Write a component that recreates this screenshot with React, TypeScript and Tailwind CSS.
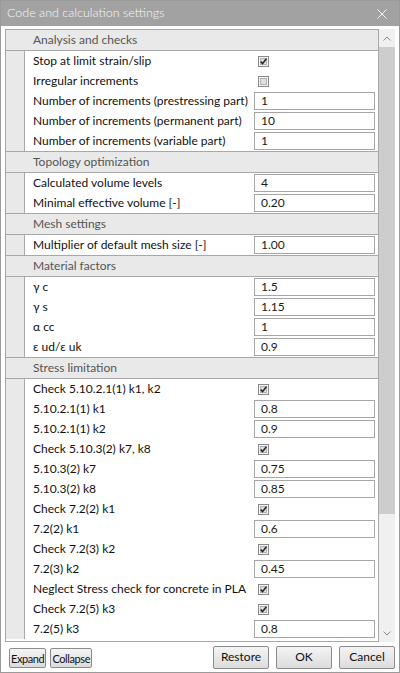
import React from "react";

type Row = { label: string; value?: string; check?: boolean };
type Section = { title: string; rows: Row[] };

const sections: Section[] = [
  {
    title: "Analysis and checks",
    rows: [
      { label: "Stop at limit strain/slip", check: true },
      { label: "Irregular increments", check: false },
      { label: "Number of increments (prestressing part)", value: "1" },
      { label: "Number of increments (permanent part)", value: "10" },
      { label: "Number of increments (variable part)", value: "1" },
    ],
  },
  {
    title: "Topology optimization",
    rows: [
      { label: "Calculated volume levels", value: "4" },
      { label: "Minimal effective volume [-]", value: "0.20" },
    ],
  },
  {
    title: "Mesh settings",
    rows: [{ label: "Multiplier of default mesh size [-]", value: "1.00" }],
  },
  {
    title: "Material factors",
    rows: [
      { label: "γ c", value: "1.5" },
      { label: "γ s", value: "1.15" },
      { label: "α cc", value: "1" },
      { label: "ε ud/ε uk", value: "0.9" },
    ],
  },
  {
    title: "Stress limitation",
    rows: [
      { label: "Check 5.10.2.1(1) k1, k2", check: true },
      { label: "5.10.2.1(1) k1", value: "0.8" },
      { label: "5.10.2.1(1) k2", value: "0.9" },
      { label: "Check 5.10.3(2) k7, k8", check: true },
      { label: "5.10.3(2) k7", value: "0.75" },
      { label: "5.10.3(2) k8", value: "0.85" },
      { label: "Check 7.2(2) k1", check: true },
      { label: "7.2(2) k1", value: "0.6" },
      { label: "Check 7.2(3) k2", check: true },
      { label: "7.2(3) k2", value: "0.45" },
      { label: "Neglect Stress check for concrete in PLA", check: true },
      { label: "Check 7.2(5) k3", check: true },
      { label: "7.2(5) k3", value: "0.8" },
    ],
  },
];

const CheckBox = ({ checked }: { checked: boolean }) => (
  <svg width="11" height="11" viewBox="0 0 11 11">
    <rect x="0.5" y="0.5" width="10" height="10" fill="#f2f2f2" stroke="#8a8a8a" />
    <rect x="2.5" y="2.5" width="6" height="6" fill="#dedede" stroke="#b4b4b4" />
    {checked && (
      <path d="M2.8 5.6 L4.6 7.6 L8.4 2.8" fill="none" stroke="#2a2a2a" strokeWidth="1.6" />
    )}
  </svg>
);

const SettingRow = ({ row }: { row: Row }) => (
  <div className="flex h-[20px]">
    <div className="w-[19px] shrink-0 bg-[#e9e9e9] border-r border-[#a8a8a8]" />
    <div className="flex-1 flex items-center pl-[8px] text-[12px] text-[#111] whitespace-nowrap overflow-hidden">
      {row.label}
    </div>
    <div className="w-[124px] shrink-0 flex items-center pr-[3px]">
      {row.check !== undefined ? (
        <div className="pl-[4px] flex items-center">
          <CheckBox checked={row.check} />
        </div>
      ) : (
        <div className="w-full h-[18px] border border-[#a6a6a6] bg-white flex items-center pl-[6px] text-[12px] text-[#1a1a1a]">
          {row.value}
        </div>
      )}
    </div>
  </div>
);

const btnBase =
  "border border-[#8c8c8c] rounded-[2px] bg-gradient-to-b from-[#f4f4f4] to-[#dcdcdc] text-[#111] flex items-center justify-center leading-none whitespace-nowrap";

const App = () => {
  return (
    <div
      className="w-[400px] h-[673px] border border-[#9a9a9a] bg-white flex flex-col overflow-hidden"
      style={{ fontFamily: "Lato, 'Noto Sans', sans-serif" }}
    >
      <div className="h-[25px] shrink-0 bg-[#a2a2a2] flex items-center justify-between pl-[6px] pr-[12px]">
        <span className="text-[12.5px] text-[#f7f7f7] font-light leading-none">
          Code and calculation settings
        </span>
        <svg width="10" height="10" viewBox="0 0 10 10">
          <path d="M0.5 0.5 L9.5 9.5 M9.5 0.5 L0.5 9.5" stroke="#f4f4f4" strokeWidth="1" />
        </svg>
      </div>

      <div className="flex-1 flex flex-col px-[4px] pt-[3px]">
        <div className="h-[613px] flex border-l border-[#a8a8a8]">
          <div className="flex-1 overflow-hidden border-r border-[#a8a8a8] border-b">
            {sections.map((s) => (
              <div key={s.title}>
                <div className="h-[22px] bg-[#e9e9e9] border-y border-[#a8a8a8] flex items-center pl-[27px] text-[12px] text-[#555]">
                  {s.title}
                </div>
                {s.rows.map((r) => (
                  <SettingRow key={r.label} row={r} />
                ))}
              </div>
            ))}
          </div>
          <div className="w-[16px] shrink-0 flex flex-col bg-[#f0f0f0]">
            <div className="h-[18px] flex items-center justify-center">
              <svg width="8" height="5" viewBox="0 0 8 5">
                <path d="M0.5 4.5 L4 1 L7.5 4.5" fill="none" stroke="#8a8a8a" />
              </svg>
            </div>
            <div className="h-[467px] bg-[#cdcdcd]" />
            <div className="flex-1" />
            <div className="h-[18px] flex items-center justify-center">
              <svg width="8" height="5" viewBox="0 0 8 5">
                <path d="M0.5 0.5 L4 4 L7.5 0.5" fill="none" stroke="#8a8a8a" />
              </svg>
            </div>
          </div>
        </div>

        <div className="flex-1 flex items-center pl-[4px]">
          <div className="flex gap-[4px] self-end mb-[4px]">
            <button className={`${btnBase} px-[1px] h-[20px] text-[11px] tracking-[-0.4px]`}>Expand</button>
            <button className={`${btnBase} px-[1px] h-[20px] text-[11px] tracking-[-0.4px]`}>Collapse</button>
          </div>
          <div className="ml-auto flex gap-[7px]">
            <button className={`${btnBase} w-[56px] h-[23px] text-[12px]`}>Restore</button>
            <button className={`${btnBase} w-[56px] h-[23px] text-[12px]`}>OK</button>
            <button className={`${btnBase} w-[56px] h-[23px] text-[12px]`}>Cancel</button>
          </div>
        </div>
      </div>
    </div>
  );
};

export default App;
